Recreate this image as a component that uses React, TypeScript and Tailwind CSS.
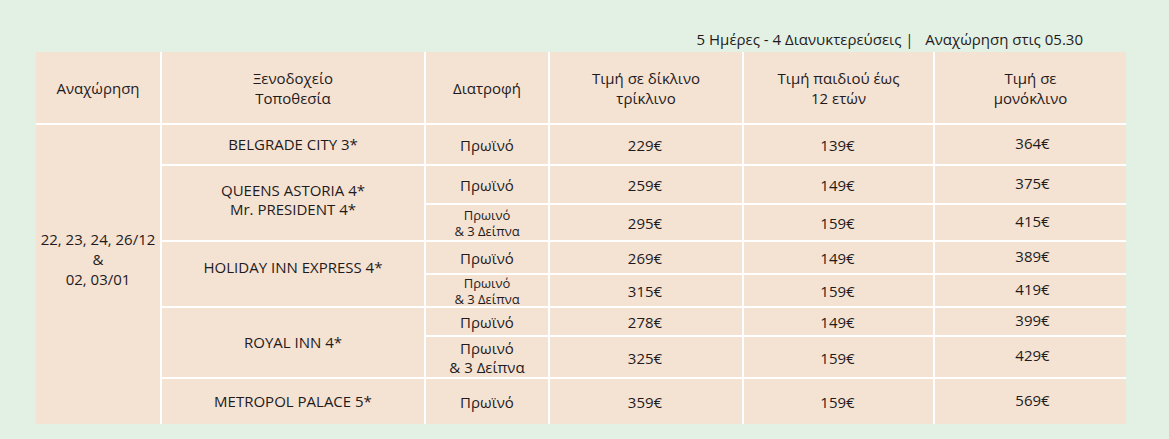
import { Fragment } from "react";

const font = { fontFamily: '"Open Sans", "Noto Sans", sans-serif' };

type Row = {
  diet: string[];
  small?: boolean;
  prices: [string, string, string];
};

type Hotel = { name: string[]; span: number; pad?: string; rows: Row[] };

const hotels: Hotel[] = [
  { name: ["BELGRADE CITY 3*"], span: 1, rows: [{ diet: ["Πρωϊνό"], prices: ["229€", "139€", "364€"] }] },
  {
    name: ["QUEENS ASTORIA 4*", "Mr. PRESIDENT 4*"],
    span: 2,
    pad: "pb-[6px]",
    rows: [
      { diet: ["Πρωϊνό"], prices: ["259€", "149€", "375€"] },
      { diet: ["Πρωινό", "& 3 Δείπνα"], small: true, prices: ["295€", "159€", "415€"] },
    ],
  },
  {
    name: ["HOLIDAY INN EXPRESS 4*"],
    span: 2,
    pad: "pb-[14px]",
    rows: [
      { diet: ["Πρωϊνό"], prices: ["269€", "149€", "389€"] },
      { diet: ["Πρωινό", "& 3 Δείπνα"], small: true, prices: ["315€", "159€", "419€"] },
    ],
  },
  {
    name: ["ROYAL INN 4*"],
    span: 2,
    rows: [
      { diet: ["Πρωϊνό"], prices: ["278€", "149€", "399€"] },
      { diet: ["Πρωινό", "& 3 Δείπνα"], prices: ["325€", "159€", "429€"] },
    ],
  },
  { name: ["METROPOL PALACE 5*"], span: 1, rows: [{ diet: ["Πρωϊνό"], prices: ["359€", "159€", "569€"] }] },
];

const headers = [
  ["Αναχώρηση"],
  ["Ξενοδοχείο", "Τοποθεσία"],
  ["Διατροφή"],
  ["Τιμή σε δίκλινο", "τρίκλινο"],
  ["Τιμή παιδιού έως", "12 ετών"],
  ["Τιμή σε", "μονόκλινο"],
];

const App = () => {
  return (
    <div className="w-[1169px] h-[439px] bg-[#e3f1e5] text-[#1f1b1c] overflow-hidden" style={font}>
      <div className="pl-[36px] pt-[29px]">
        <div className="w-[1090px] flex justify-end pr-[43px] text-[15px] leading-[20px] h-[23px]">
          <span className="whitespace-pre">5 Ημέρες - 4 Διανυκτερεύσεις |   Αναχώρηση στις 05.30</span>
        </div>

        <div className="grid grid-cols-[124px_262px_122px_192px_189px_191px] grid-rows-[71px_39px_37px_35px_31px_31px_27px_40px_45px] gap-[2px] bg-white w-[1090px] text-[15px]">
          {headers.map((h, i) => (
            <div key={i} className="bg-[#f4e2d3] flex flex-col items-center justify-center text-center leading-[20px]">
              {h.map((l) => (
                <span key={l}>{l}</span>
              ))}
            </div>
          ))}

          <div className="row-span-8 bg-[#f4e2d3] flex flex-col items-center justify-center text-center leading-[20px] pb-[32px]">
            <span>22, 23, 24, 26/12</span>
            <span>&amp;</span>
            <span>02, 03/01</span>
          </div>

          {hotels.map((h) => (
            <Fragment key={h.name[0]}>
              <div
                className={`bg-[#f4e2d3] flex flex-col items-center justify-center text-center leading-[19px] ${h.span === 2 ? "row-span-2" : ""} ${h.pad ?? ""}`}
              >
                {h.name.map((l) => (
                  <span key={l}>{l}</span>
                ))}
              </div>
              {h.rows.map((r, ri) => (
                <Fragment key={ri}>
                  <div
                    className={`bg-[#f4e2d3] flex flex-col items-center justify-center text-center ${r.small ? "text-[13px] leading-[16px]" : "leading-[19px] pt-[2px]"}`}
                  >
                    {r.diet.map((l) => (
                      <span key={l}>{l}</span>
                    ))}
                  </div>
                  {r.prices.map((p, pi) => (
                    <div
                      key={pi}
                      className={`bg-[#f4e2d3] flex items-center justify-center ${pi === 2 ? "pb-[3px] pl-[4px]" : "pt-[2px] pr-[2px]"}`}
                    >
                      {p}
                    </div>
                  ))}
                </Fragment>
              ))}
            </Fragment>
          ))}
        </div>
      </div>
    </div>
  );
};

export default App;
